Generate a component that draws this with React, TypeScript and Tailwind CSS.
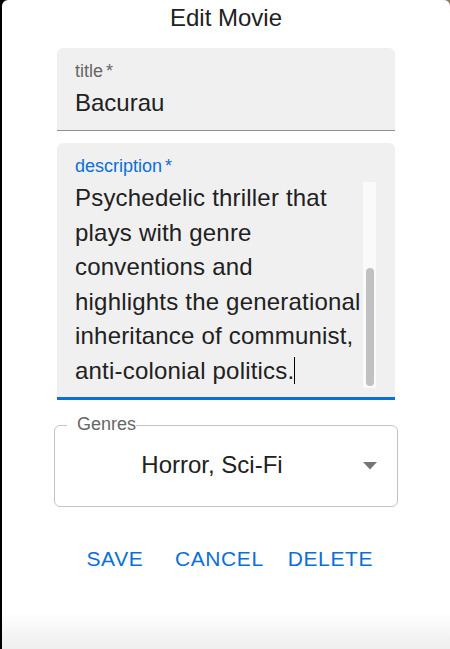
import React from "react";

const lines = [
  "Psychedelic thriller that",
  "plays with genre",
  "conventions and",
  "highlights the generational",
  "inheritance of communist,",
  "anti-colonial politics.",
];

export default function App() {
  return (
    <div
      className="w-[450px] h-[649px] flex bg-[linear-gradient(to_right,#000_50%,#8a7a5a_50%)]"
      style={{ fontFamily: '"Liberation Sans", Arial, sans-serif' }}
    >
      <div className="ml-[2px] flex-1 h-full rounded-t-[6px] bg-[linear-gradient(to_bottom,#fff_0,#fff_612px,#eeeeee_649px)] flex flex-col items-center text-[#212121]">
        {/* Title */}
        <div className="mt-[2px] h-[32px] leading-[32px] text-[24px]">Edit Movie</div>

        {/* title field */}
        <div className="mt-[14px] w-[338px] bg-[#f0f0f0] rounded-t-[6px] border-b-[1.5px] border-[#8f8f8f] pt-[14px] pb-[15px] px-[18px]">
          <div className="h-[18px] leading-[18px] text-[18px] text-[#666666]">
            title<span className="ml-[3px]">*</span>
          </div>
          <div className="mt-[11px] h-[24px] leading-[24px] text-[24px]">Bacurau</div>
        </div>

        {/* description field */}
        <div className="mt-[12px] w-[338px] bg-[#f0f0f0] rounded-t-[6px] border-b-[3px] border-[#0a6fd8] pt-[14px] pb-[9px] pl-[18px] pr-[18px]">
          <div className="h-[18px] leading-[18px] text-[18px] text-[#0a6fd8]">
            description<span className="ml-[3px]">*</span>
          </div>
          <div className="mt-[6px] flex">
            <div className="flex-1 flex flex-col">
              {lines.map((l, i) => (
                <div key={i} className="h-[34.5px] leading-[34.5px] text-[24px] tracking-[0.2px] whitespace-nowrap">
                  {l}
                  {i === lines.length - 1 && (
                    <span className="inline-block w-[1px] h-[27px] bg-black align-[-5px]" />
                  )}
                </div>
              ))}
            </div>
            <div className="w-[13px] mr-[1px] mt-[1px] h-[206px] bg-[#fafafa] flex flex-col justify-end items-center pb-[2px]">
              <div className="w-[8px] h-[118px] rounded-full bg-[#c1c1c1]" />
            </div>
          </div>
        </div>

        {/* Genres */}
        <div className="relative mt-[25px] w-[344px] h-[82px] border border-[#c4c4c4] rounded-[6px] flex items-center justify-center pr-[28px]">
          <span className="absolute left-[12px] top-[-11px] h-[18px] leading-[18px] text-[18px] text-[#666666] bg-white pl-[10px]">
            Genres
          </span>
          <span className="text-[24px] leading-[24px] mt-[-2px]">Horror, Sci-Fi</span>
          <svg
            className="absolute right-[20px] top-[36px]"
            width="14"
            height="8"
            viewBox="0 0 14 8"
          >
            <path d="M0 0 L14 0 L7 7.5 Z" fill="#757575" />
          </svg>
        </div>

        {/* Buttons */}
        <div className="mt-[32px] flex">
          {["SAVE", "CANCEL", "DELETE"].map((b) => (
            <button
              key={b}
              className="min-w-[96px] h-[39px] px-[12px] flex items-center justify-center text-[21px] leading-[21px] tracking-[0.6px] text-[#0a6fd8]"
            >
              {b}
            </button>
          ))}
        </div>
      </div>
    </div>
  );
}
